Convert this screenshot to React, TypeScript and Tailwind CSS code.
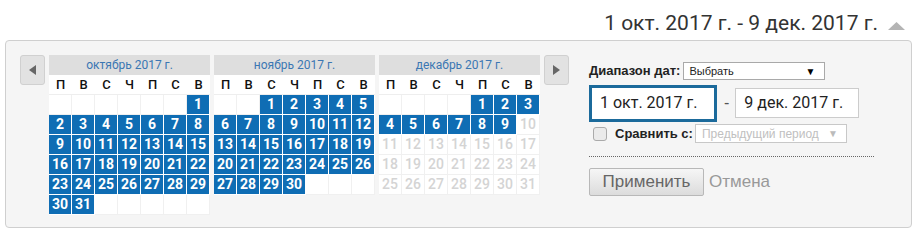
import React from "react";

const WEEKDAYS = ["П", "В", "С", "Ч", "П", "С", "В"];

type Month = {
  title: string;
  offset: number; // empty cells before day 1
  days: number;
  lastSelected: number; // days after this are disabled
};

const MONTHS: Month[] = [
  { title: "октябрь 2017 г.", offset: 6, days: 31, lastSelected: 31 },
  { title: "ноябрь 2017 г.", offset: 2, days: 30, lastSelected: 30 },
  { title: "декабрь 2017 г.", offset: 4, days: 31, lastSelected: 9 },
];

function MonthGrid({ month }: { month: Month }) {
  const cells: (number | null)[] = [];
  for (let i = 0; i < month.offset; i++) cells.push(null);
  for (let d = 1; d <= month.days; d++) cells.push(d);
  while (cells.length % 7 !== 0) cells.push(null);

  return (
    <div className="w-[161px] flex flex-col">
      <div className="h-[20px] bg-[#dedede] flex items-center justify-center text-[12px] text-[#3b77b3]">
        {month.title}
      </div>
      <div className="bg-white">
        <div className="grid grid-cols-7 h-[20px] border-b border-[#eee]">
          {WEEKDAYS.map((w, i) => (
            <div key={i} className="flex items-center justify-center text-[13px] font-medium text-[#111]">
              {w}
            </div>
          ))}
        </div>
        <div className="grid grid-cols-7">
          {cells.map((d, i) => {
            const selected = d !== null && d <= month.lastSelected;
            return (
              <div
                key={i}
                className={`h-[20px] flex items-center justify-center text-[14px] border-r border-b ${
                  selected
                    ? "bg-[#0f6db4] text-white font-bold border-white"
                    : "bg-white text-[#d4d4d4] font-medium border-[#f0f0f0]"
                }`}
              >
                {d ?? ""}
              </div>
            );
          })}
        </div>
      </div>
    </div>
  );
}

function NavButton({ dir }: { dir: "left" | "right" }) {
  return (
    <div className="w-[25px] h-[30px] rounded-[3px] border border-[#d0d0d0] bg-[#e2e2e2] flex items-center justify-center">
      <svg width="7" height="10" viewBox="0 0 7 10">
        {dir === "left" ? (
          <path d="M7 0 L0 5 L7 10 Z" fill="#666" />
        ) : (
          <path d="M0 0 L7 5 L0 10 Z" fill="#666" />
        )}
      </svg>
    </div>
  );
}

export default function App() {
  return (
    <div className="w-[918px] h-[235px] bg-white" style={{ fontFamily: "Roboto, 'Noto Sans', sans-serif" }}>
      <div className="h-[40px] flex items-start justify-end pr-[13px] pt-[9px]">
        <span className="text-[21px] leading-[28px] text-[#333]">1 окт. 2017 г. - 9 дек. 2017 г.</span>
        <svg className="ml-[10px] mt-[13px]" width="17" height="8" viewBox="0 0 17 8">
          <path d="M8.5 0 L17 8 L0 8 Z" fill="#b4b4b4" />
        </svg>
      </div>

      <div className="ml-[5px] w-[907px] h-[188px] border border-[#cfcfcf] rounded-[4px] bg-[#f5f5f5] flex pt-[14px] pl-[14px]">
        <div className="flex items-start gap-[4px]">
          <NavButton dir="left" />
          {MONTHS.map((m) => (
            <MonthGrid key={m.title} month={m} />
          ))}
          <NavButton dir="right" />
        </div>

        <div className="ml-[20px] pt-[7px] flex flex-col" style={{ fontFamily: "'Liberation Sans', Arial, sans-serif" }}>
          <div className="flex items-center h-[18px]">
            <span className="text-[13px] font-bold text-[#222]">Диапазон дат:</span>
            <div className="ml-[3px] w-[142px] h-[18px] bg-white border border-[#a9a9a9] flex items-center justify-between px-[5px]">
              <span className="text-[11px] text-[#222]">Выбрать</span>
              <span className="text-[10px] text-black mr-[4px]">▼</span>
            </div>
          </div>

          <div className="flex items-center mt-[4px] h-[38px]">
            <div className="w-[128px] h-[37px] border-[3px] border-[#1b6a9b] bg-white flex items-center pl-[8px]">
              <span className="text-[16px] text-[#222]" style={{ fontFamily: "Roboto, sans-serif" }}>1 окт. 2017 г.</span>
            </div>
            <span className="ml-[7px] mr-[6px] text-[16px] text-[#555]">-</span>
            <div className="w-[124px] h-[30px] border border-[#ccc] bg-white flex items-center pl-[8px]">
              <span className="text-[16px] text-[#222]" style={{ fontFamily: "Roboto, sans-serif" }}>9 дек. 2017 г.</span>
            </div>
          </div>

          <div className="flex items-center mt-[2px] h-[19px]">
            <div className="ml-[4px] w-[14px] h-[14px] rounded-[3px] border border-[#aaa] bg-[#eaeaea]" />
            <span className="ml-[8px] text-[13px] font-bold text-[#222]">Сравнить с:</span>
            <div className="ml-[2px] w-[152px] h-[19px] bg-white border border-[#c8c8c8] flex items-center justify-between px-[6px]">
              <span className="text-[12px] text-[#c0c0c0]">Предыдущий период</span>
              <span className="text-[10px] text-[#bbb] mr-[2px]">▼</span>
            </div>
          </div>

          <div className="mt-[13px] w-[285px] border-t border-dotted border-[#666]" />

          <div className="flex items-center mt-[11px]">
            <div className="w-[115px] h-[28px] border border-[#b8b8b8] rounded-[2px] bg-gradient-to-b from-[#f6f6f6] to-[#dcdcdc] flex items-center justify-center">
              <span className="text-[17px] text-[#666]">Применить</span>
            </div>
            <span className="ml-[5px] text-[17px] text-[#999]">Отмена</span>
          </div>
        </div>
      </div>
    </div>
  );
}
